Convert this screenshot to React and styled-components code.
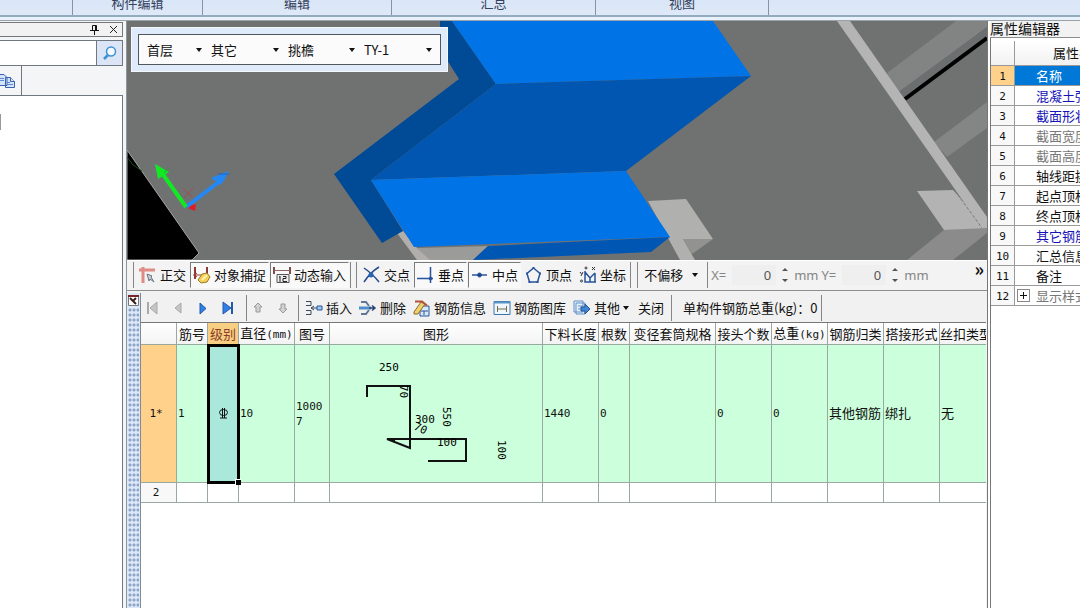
import React from "react";
import styled, { createGlobalStyle } from "styled-components";

const GlobalStyle = createGlobalStyle`
  * {
    box-sizing: border-box;
  }
  body {
    margin: 0;
    background: #fff;
    color: #111;
    font-family: "Noto Sans CJK SC", "Liberation Sans", sans-serif;
    font-size: 13px;
    line-height: 16px;
    overflow: hidden;
  }
  button,
  input,
  select {
    font: inherit;
    color: inherit;
    margin: 0;
    padding: 0;
    border: 0;
    border-radius: 0;
    background: transparent;
    outline: none;
  }
`;

const Page = styled.div`
  display: flex;
  flex-direction: column;
  height: 100vh;
`;

/* ribbon */
const Ribbon = styled.header`
  display: flex;
  flex: none;
  height: 21px;
  background: #e9f1fa;
  border-bottom: 1px solid #9aa3ab;
`;
const RibbonGroups = styled.div`
  display: flex;
  flex: 1;
  height: 17px;
  background: linear-gradient(#d9e6f7, #dfe9f8);
  border-bottom: 2px solid #93abbf;
`;
const RibbonGroup = styled.div`
  display: flex;
  flex: none;
  align-items: flex-end;
  justify-content: center;
  width: ${(p) => p.$width}px;
  padding-bottom: 4px;
  color: #33415c;
  border-right: 1px solid #8793a3;
`;

const Main = styled.main`
  display: flex;
  flex: 1;
  min-height: 0;
`;

/* left panel */
const Left = styled.aside`
  display: flex;
  flex: none;
  flex-direction: column;
  width: 127px;
  padding: 1px 3px 0 0;
  background: #f3f5f7;
  border-right: 1px solid #8f959b;
`;
const LeftTitle = styled.div`
  display: flex;
  align-items: center;
  justify-content: flex-end;
  gap: 10px;
  height: 15px;
  padding-right: 4px;
  background: #f2f2f2;
  border: 1px solid #777;
  border-left: 0;
`;
const IconButton = styled.button`
  display: flex;
  align-items: center;
  justify-content: center;
`;
const Search = styled.form`
  display: flex;
  height: 26px;
  margin-top: 3px;
  border: 1px solid #6f7780;
  border-left: 0;

  input {
    flex: 1;
    min-width: 0;
    background: #fff;
    border-right: 1px solid #6f7780;
  }
  button {
    width: 25px;
    background: #dbe5f5;
  }
`;
const LeftTabs = styled.div`
  display: flex;
  height: 29px;

  button {
    width: 22px;
    justify-content: flex-start;
    border-right: 1px solid #6f7780;
  }
`;
const Tree = styled.div`
  flex: 1;
  padding-top: 18px;
  background: #fff;
  border-top: 1px solid #6f7780;
  border-right: 1px solid #6f7780;
`;
const TreeFocus = styled.div`
  width: 1px;
  height: 16px;
  background: #999;
`;

/* centre */
const Center = styled.section`
  display: flex;
  flex: 1;
  flex-direction: column;
  min-width: 0;
  background: #f1f2f2;
`;
const Viewport = styled.div`
  position: relative;
  flex: none;
  height: 239px;
  background: #707271;
  overflow: hidden;
`;
const Scene = styled.svg`
  display: block;
  width: 100%;
  height: 100%;
`;
const Selector = styled.div`
  position: absolute;
  top: 6px;
  left: 4px;
  padding: 6px;
  background: #dfeafa;
  border: 1px solid #f4f8fd;
`;
const SelectorInner = styled.div`
  display: flex;
  height: 31px;
  background: #fbfbfb;
  border: 1px solid #4f565e;
`;
const SelectBox = styled.label`
  display: grid;
  flex: none;
  align-items: center;
  width: ${(p) => p.$width}px;

  select,
  svg {
    grid-area: 1 / 1;
  }
  select {
    width: 100%;
    height: 100%;
    padding-left: ${(p) => p.$pad || 8}px;
    appearance: none;
  }
  svg {
    justify-self: end;
    margin-right: 8px;
    pointer-events: none;
  }
`;

const SnapBar = styled.div`
  display: flex;
  flex: none;
  align-items: center;
  gap: 1px;
  height: 31px;
  padding: 0 3px 2px 6px;
  background: #f3f3f3;
  border-top: 1px solid #fff;
  border-bottom: 1px solid #8d8d8d;
`;
const Tool = styled.button`
  display: flex;
  flex: none;
  align-items: center;
  gap: 3px;
  height: 26px;
  padding: 0 ${(p) => (p.$textOnly ? 4 : 2)}px;
  white-space: nowrap;
  background: ${(p) => (p.$pressed ? "#f9f9f9" : "transparent")};
  border: 1px solid transparent;
  border-top-color: ${(p) => (p.$pressed ? "#7b7b7b" : "transparent")};
  border-left-color: ${(p) => (p.$pressed ? "#7b7b7b" : "transparent")};
`;
const Divider = styled.span`
  flex: none;
  width: 1px;
  height: 26px;
  margin: 0 ${(p) => p.$after ?? 1}px 0 ${(p) => p.$before ?? 0}px;
  background: #858585;
`;
const Coord = styled.label`
  display: flex;
  flex: none;
  align-items: center;
  gap: 6px;
  margin-left: 2px;
  color: #858585;
  font-family: "Noto Sans", "Noto Sans CJK SC", sans-serif;

  input {
    width: 44px;
    height: 20px;
    padding-right: 5px;
    color: #555;
    text-align: right;
    background: #efefef;
  }
`;
const More = styled.button`
  align-self: flex-start;
  height: 14px;
  margin-left: auto;
  font-size: 18px;
  font-weight: 700;
  line-height: 10px;
`;

const Editor = styled.div`
  display: flex;
  flex: 1;
  min-height: 0;
  margin-top: 2px;
`;
const Grip = styled.div`
  display: flex;
  flex: none;
  flex-direction: column;
  width: 14px;
  padding: 2px 1px 0;
  background: #dce8f7;
  border-right: 1px solid #7f8a97;
`;
const GripDots = styled.div`
  flex: 1;
  margin-top: 2px;
  background: radial-gradient(circle at 2px 2px, #8fa4c9 1px, transparent 2px) 0 0 / 4px 5px;
`;
const EditorBody = styled.div`
  display: flex;
  flex: 1;
  flex-direction: column;
  min-width: 0;
`;
const EditBar = styled.div`
  display: flex;
  flex: none;
  align-items: center;
  gap: 1px;
  height: 29px;
  background: #f1f1f1;
`;
const Nav = styled(IconButton)`
  flex: none;
  width: 24px;
  height: 24px;
`;
const Total = styled.span`
  margin-left: 8px;
  white-space: nowrap;
`;
const GridWrap = styled.div`
  flex: 1;
  min-height: 0;
  margin-right: 1px;
  overflow: hidden;
  background: #fff;
  border-top: 1px solid #777;
`;
const Grid = styled.table`
  table-layout: fixed;
  width: 100%;
  border-spacing: 0;
  line-height: 13px;

  th,
  td {
    padding: 0 1px 2px 1px;
    text-align: left;
    border-right: 1px solid #9aa99f;
    border-bottom: 1px solid #9aa99f;
  }
  tr > :last-child {
    border-right: 0;
  }
  th {
    height: 22px;
    padding: 0;
    font-weight: 400;
    text-align: center;
    white-space: nowrap;
    overflow: hidden;
    background: linear-gradient(#fff, #f3f3f3);
  }
`;
const ActiveHead = styled.th`
  && {
    color: #8a3c28;
    background: #f7cf83;
  }
`;
const BarRow = styled.tr`
  height: 138px;
  background: #ccffdb;
`;
const EmptyRow = styled.tr`
  height: 20px;
`;
const RowHead = styled.td`
  && {
    padding-right: 6px;
    text-align: center;
    background: ${(p) => (p.$active ? "#ffd18a" : "#f8f8f8")};
  }
`;
const ActiveCell = styled.td`
  && {
    position: relative;
    padding: 0;
    text-align: center;
    background: #abe8dc;
    outline: 3px solid #000;
    outline-offset: -2px;
  }
  &::after {
    content: "";
    position: absolute;
    right: -3px;
    bottom: -3px;
    width: 5px;
    height: 5px;
    background: #000;
    border-top: 1px solid #fff;
    border-left: 1px solid #fff;
  }
`;
const ShapeCell = styled.td`
  && {
    padding: 0 1px 0 2px;
  }
`;
const Num = styled.span`
  font-family: "DejaVu Sans Mono", monospace;
  font-size: 11px;
  line-height: 12px;
  word-break: break-all;
`;
const Shape = styled.svg`
  display: block;
  height: 137px;
  font-family: "DejaVu Sans Mono", monospace;
  font-size: 11px;
`;

/* property editor */
const Right = styled.aside`
  flex: none;
  width: 93px;
  padding-left: 2px;
  overflow: hidden;
  background: #fff;
  border-left: 1px solid #777;
  white-space: nowrap;
`;
const PropsTitle = styled.h2`
  height: 17px;
  margin: 0;
  font-size: 14px;
  font-weight: 400;
  line-height: 15px;
  background: #f2f2f2;
  border-bottom: 1px solid #8d8d8d;
`;
const PropsBody = styled.div`
  height: 100%;
  padding-top: 3px;
  border-left: 1px solid #777;
`;
const Props = styled.table`
  table-layout: fixed;
  width: 100%;
  border-spacing: 0;

  th,
  td {
    height: 20px;
    padding: 0;
    font-weight: 400;
    text-align: left;
    overflow: hidden;
    border-bottom: 1px solid #9a9a9a;
  }
  thead th {
    height: 25px;
    padding-left: 38px;
    background: linear-gradient(#fff, #f1f1f1);
  }
  tr > :first-child {
    padding: 0;
    text-align: center;
    border-right: 1px solid #9a9a9a;
  }
`;
const PropIndex = styled.th`
  && {
    line-height: 14px;
    background: ${(p) => (p.$active ? "#ffd18a" : "#f8f8f8")};
  }
`;
const PropName = styled.td`
  color: ${(p) => p.$color || "#111"};
  background: ${(p) => (p.$active ? "#0078d7" : "#fff")};
`;
const PropFlex = styled.div`
  display: flex;
  align-items: center;
  height: 19px;
  padding-left: ${(p) => (p.$expand ? 2 : 21)}px;
  gap: 6px;
`;
const Expand = styled.button`
  display: flex;
  flex: none;
  align-items: center;
  justify-content: center;
  width: 13px;
  height: 13px;

  && {
    border: 1px solid #888;
  }
`;

const Icon = ({ children, size = 18 }) => (
  <svg width={size} height={size} viewBox={`0 0 ${size} ${size}`} fill="none" stroke="#28549c" aria-hidden="true">
    {children}
  </svg>
);

const Caret = () => (
  <svg width="6" height="4" viewBox="0 0 6 4" aria-hidden="true">
    <path d="M0 0h6L3 4z" fill="#111" />
  </svg>
);

const Spinner = () => (
  <svg width="6" height="16" viewBox="0 0 6 16" fill="#555" aria-hidden="true">
    <path d="M0 4l3-3 3 3zM0 12h6l-3 3z" />
  </svg>
);

const icons = {
  ortho: (
    <>
      <path d="M0 4h16M4 1v16" stroke="#e08c86" strokeWidth="3" />
      <path d="M8 8l5 2-1 1 3 5-4-3-1 2z" fill="#c9ced6" stroke="#6e7682" />
    </>
  ),
  snap: (
    <>
      <path d="M2 1v12M14 1v8" stroke="#8c3a33" strokeWidth="2" />
      <path d="M0 9h9M4 7L1 9l3 2" stroke="#98433b" />
      <path d="M5 14l4-6 5-1 3 4-3 5-6 1z" fill="#f4cf54" stroke="#9a7927" />
      <path d="M9 14l5-5" stroke="#fff2b0" strokeWidth="2" />
    </>
  ),
  dynamic: (
    <>
      <path d="M1 1v7M17 1v7" stroke="#7a4c4a" strokeWidth="2" />
      <path d="M1 4.500h16" stroke="#8d6664" />
      <path d="M4 8.500h12v8H4z" stroke="#555" fill="#eee" />
      <path d="M7 10v6M6 11h1M10 10.500h3v2h-3v3h4" stroke="#222" />
    </>
  ),
  cross: (
    <>
      <path d="M1 2c3 2 11 9 15 14M16 1C11 4 5 10 1 16" stroke="#254a8d" strokeWidth="1.500" />
      <circle cx="8" cy="9" r="2.500" fill="#2767b4" stroke="none" />
    </>
  ),
  perp: (
    <>
      <path d="M0 12.500h16M13.500 1v16" strokeWidth="1.500" />
      <circle cx="13.500" cy="12.500" r="1.500" fill="#28549c" />
    </>
  ),
  mid: (
    <>
      <path d="M1 9h15" strokeWidth="1.500" />
      <circle cx="8.500" cy="9" r="2" fill="#1e4488" />
    </>
  ),
  vertex: (
    <>
      <path d="M8.500 2l6.500 5.500-2.500 8.500h-8L2 7.500z" strokeWidth="1.500" />
      <path d="M7.500 1h2v2h-2zM1 6.500h2v2H1zM14 6.500h2v2h-2zM3.500 15h2v2h-2zM11.500 15h2v2h-2z" fill="#28549c" stroke="none" />
    </>
  ),
  axes: (
    <>
      <path d="M6 5v11h11M6 6l5 6 5-5M11 12v4M16 7v9" strokeWidth="1.500" />
      <path d="M1 6l1.500 2M4 6l-2 4M13 1l3 3M16 1l-3 3" stroke="#333" />
      <circle cx="7" cy="2" r="1" stroke="#333" />
      <circle cx="2.500" cy="15" r="1" stroke="#333" />
    </>
  ),
  insert: (
    <>
      <path d="M1 2.500h5v4H1M1 11.500h5v4H1M6 9h6M9 7L6 9l3 2" stroke="#3b4657" />
      <path d="M12 7h5v4h-5z" fill="#9ccbed" stroke="#28549c" />
    </>
  ),
  remove: (
    <>
      <path d="M2 3h5l3 4M2 15h5l3-4" stroke="#5f7694" strokeWidth="2" />
      <path d="M0 9h12" stroke="#4f8dcb" strokeWidth="3" />
      <path d="M10 9h6M13 6.500L16 9l-3 2.500" stroke="#27436f" strokeWidth="1.500" />
    </>
  ),
  info: (
    <>
      <path d="M7 7h9v10H7z" fill="#d8e9f8" />
      <path d="M8 12h7M11 12v4" />
      <path d="M1 13L8 3l4 2-7 10H1z" fill="#efd06b" stroke="#8b6a2c" />
      <path d="M2 2.500h7l5 4" stroke="#b4533d" strokeWidth="2" />
    </>
  ),
  library: (
    <>
      <path d="M1 2.500h16v13H1z" fill="#eef7fd" stroke="#3c74ae" />
      <path d="M1 3.500h16" strokeWidth="2" stroke="#5795c9" />
      <path d="M4.500 7v6M4 10h9M13.500 7v6" stroke="#796b42" />
    </>
  ),
  other: (
    <>
      <path d="M1 2h9v11H1zM3 4h9v11H3z" fill="#e6f0fb" stroke="#5e8fc5" />
      <path d="M5 7h5M5 10h4" stroke="#5e8fc5" />
      <path d="M8 8h4V5l5 5-5 5v-3H8z" fill="#3f85d8" stroke="#265291" />
    </>
  ),
};

const Snap = ({ icon, label, pressed }) => (
  <Tool type="button" $pressed={pressed} aria-pressed={!!pressed}>
    <Icon>{icons[icon]}</Icon>
    {label}
  </Tool>
);

const Select = ({ name, value, width, pad }) => (
  <SelectBox $width={width} $pad={pad}>
    <select aria-label={name} defaultValue={value}>
      <option>{value}</option>
    </select>
    <Caret />
  </SelectBox>
);

const ribbonGroups = [
  ["", 73],
  ["构件编辑", 130],
  ["编辑", 189],
  ["汇总", 204],
  ["视图", 173],
];

const columns = [36, 31, 31, 56, 35, 213, 56, 31, 86, 56, 56, 56, 56];

const properties = [
  { name: "名称", color: "#fff", active: true },
  { name: "混凝土强度等级", color: "#1512b8" },
  { name: "截面形状", color: "#1512b8" },
  { name: "截面宽度(mm)", color: "#777" },
  { name: "截面高度(mm)", color: "#777" },
  { name: "轴线距挑檐外边" },
  { name: "起点顶标高(m)" },
  { name: "终点顶标高(m)" },
  { name: "其它钢筋", color: "#1512b8" },
  { name: "汇总信息" },
  { name: "备注" },
  { name: "显示样式", color: "#777", expand: true },
];

const Model = () => (
  <Scene viewBox="127 21 860 239" preserveAspectRatio="xMinYMin slice" role="img" aria-label="三维视图">
    <path d="M127 150l72 103-7 7h-65z" fill="#000" stroke="#a5a5a5" />
    <path d="M127 157l6 8 9 6" fill="none" stroke="#174d1b" />

    <path d="M887 73l69-52h31v6l-90 68z" fill="#828483" />
    <path d="M987 27v11l-83 60-7-5z" fill="#6c6f6f" />
    <path d="M905 99l82-61" stroke="#000" strokeWidth="4" />
    <path d="M934 142l53-40v26l-40 29z" fill="#848685" />
    <path d="M944 230l43-3v6l-34 27h-46z" fill="#8c8b8b" />
    <path d="M917 191l36-1 34 38-43 2z" fill="#b2b3b2" />
    <path d="M837 21h13l137 196v11h-5z" fill="#b3b4b3" />
    <path d="M958 195l24 33" stroke="#777" strokeDasharray="3 2" />

    <path d="M683 239h30l-21 15z" fill="#929391" />
    <path d="M648 201l38-2 27 40h-30l12 21h-15l-12-22z" fill="#b0b0ae" />
    <path d="M397 233l6-2 14 17 14 12h-14z" fill="#b1aeac" />
    <path d="M417 248l71-2-15 14h-43z" fill="#9b9b99" />

    <path d="M440 21h12l44 63-125 96 32 51-21 12-48-69 125-95-19-30z" fill="#004a96" />
    <path d="M452 21h261l38 55-255 8z" fill="#0073e6" />
    <path d="M496 84l255-8-125 95-255 9z" fill="#0056b0" />
    <path d="M371 180l255-9 44 66-256 10z" fill="#0073e6" />
    <path d="M488 246l182-9-19 15-178 8z" fill="#0057b3" />

    <path d="M183 188l10 10M193 188l-9 10" stroke="#a34a52" />
    <path d="M185 207l11-3-1 7z" fill="#df1d25" />
    <path d="M186 207l38-29" stroke="#2388f5" strokeWidth="4" />
    <path d="M211 178l18-7-8 14z" fill="#2388f5" />
    <path d="M218 174h11" stroke="#1c63d0" />
    <path d="M186 207l-24-34" stroke="#13e825" strokeWidth="4" />
    <path d="M155 164l14 8-11 7z" fill="#13e825" />
    <path d="M164 173l5-5" stroke="#25a52e" />
  </Scene>
);

const BarShape = () => (
  <Shape viewBox="332 345 209 137" role="img" aria-label="钢筋图形">
    <path d="M367 397v-11h43v62l-23-9h79v22h-38" fill="none" stroke="#111" strokeWidth="2" />
    <path d="M387 438l8 1v4z" fill="#111" />
    <text x="379" y="371">250</text>
    <text x="415" y="423">300</text>
    <text x="437" y="446">100</text>
    <text transform="translate(400 385) rotate(90)">70</text>
    <text transform="translate(443 407) rotate(90)">550</text>
    <text transform="translate(498 440) rotate(90)">100</text>
    <text transform="translate(413 429) rotate(25)">70</text>
  </Shape>
);

const App = () => (
  <Page>
    <GlobalStyle />
    <Ribbon>
      <RibbonGroups>
        {ribbonGroups.map(([label, width]) => (
          <RibbonGroup key={width} $width={width}>
            {label}
          </RibbonGroup>
        ))}
      </RibbonGroups>
    </Ribbon>
    <Main>
      <Left>
        <LeftTitle>
          <IconButton type="button" aria-label="固定">
            <svg width="9" height="10" viewBox="0 0 9 10" stroke="#111" fill="none">
              <path d="M2.500 5.500v-5h4v5M0 5.500h9M4.500 6v4" />
              <path d="M6 1v4" strokeWidth="2" />
            </svg>
          </IconButton>
          <IconButton type="button" aria-label="关闭面板">
            <svg width="9" height="9" viewBox="0 0 9 9" stroke="#222">
              <path d="M1 1l7 7M8 1L1 8" />
            </svg>
          </IconButton>
        </LeftTitle>
        <Search onSubmit={(e) => e.preventDefault()}>
          <input type="text" aria-label="搜索构件" />
          <IconButton type="submit" aria-label="搜索">
            <svg width="14" height="14" viewBox="0 0 14 14" fill="#f4faff" stroke="#3d92d4">
              <circle cx="8" cy="5.500" r="4.500" strokeWidth="1.500" />
              <path d="M5 9l-4 4" strokeWidth="2.500" />
            </svg>
          </IconButton>
        </Search>
        <LeftTabs>
          <IconButton type="button" aria-label="复制构件">
            <svg width="16" height="16" viewBox="0 0 16 16" fill="#d3e4fa" stroke="#3c62ae">
              <path d="M-3 1.500h7l3 3v8H-3zM5.500 4.500h5l4 4v6h-9z" />
              <path d="M10.500 4.500v4h4" />
              <path d="M7 9.500h3M7 11.500h6M0 5.500h4M0 7.500h4" stroke="#5c8bd0" />
            </svg>
          </IconButton>
        </LeftTabs>
        <Tree>
          <TreeFocus />
        </Tree>
      </Left>

      <Center>
        <Viewport>
          <Model />
          <Selector>
            <SelectorInner>
              <Select name="楼层" value="首层" width={71} />
              <Select name="类别" value="其它" width={77} pad={1} />
              <Select name="构件类型" value="挑檐" width={76} pad={1} />
              <Select name="构件" value="TY-1" width={77} pad={1} />
            </SelectorInner>
          </Selector>
        </Viewport>

        <SnapBar>
          <Divider />
          <Snap icon="ortho" label="正交" />
          <Snap icon="snap" label="对象捕捉" pressed />
          <Snap icon="dynamic" label="动态输入" pressed />
          <Divider $after={4} />
          <Divider $after={2} />
          <Snap icon="cross" label="交点" />
          <Snap icon="perp" label="垂点" pressed />
          <Snap icon="mid" label="中点" pressed />
          <Snap icon="vertex" label="顶点" />
          <Snap icon="axes" label="坐标" />
          <Divider $after={5} />
          <Divider $after={0} />
          <Select name="偏移方式" value="不偏移" width={67} pad={5} />
          <Divider $after={0} />
          <Coord>
            X=
            <input type="text" defaultValue="0" />
            <Spinner />
            mm
          </Coord>
          <Coord>
            Y=
            <input type="text" defaultValue="0" />
            <Spinner />
            mm
          </Coord>
          <More type="button" aria-label="更多">
            »
          </More>
        </SnapBar>

        <Editor>
          <Grip>
            <svg width="11" height="11" viewBox="0 0 11 11" fill="#fff" stroke="#222">
              <path d="M.5.5h10v10H.5z" stroke="#777" />
              <path d="M2 3l6 6M8 3L5 6" stroke="#3a1c1c" strokeWidth="2" />
              <path d="M0 1h11" stroke="#7a2626" strokeWidth="2" />
            </svg>
            <GripDots />
          </Grip>
          <EditorBody>
            <EditBar>
              <Nav type="button" aria-label="首条">
                <Icon>
                  <path d="M4 3v12" stroke="#a9a9a9" strokeWidth="2" />
                  <path d="M13 3v12L6 9z" fill="#c5c5c5" stroke="#a9a9a9" />
                </Icon>
              </Nav>
              <Nav type="button" aria-label="上一条">
                <Icon>
                  <path d="M12 4v10L6 9z" fill="#c5c5c5" stroke="#a9a9a9" />
                </Icon>
              </Nav>
              <Nav type="button" aria-label="下一条">
                <Icon>
                  <path d="M6 4v11l6-5.500z" fill="#2f7fe6" stroke="#2258ab" />
                </Icon>
              </Nav>
              <Nav type="button" aria-label="末条">
                <Icon>
                  <path d="M4 3v12l8-6z" fill="#2f7fe6" stroke="#2258ab" />
                  <path d="M13 3v12" stroke="#2258ab" strokeWidth="2" />
                </Icon>
              </Nav>
              <Divider $before={5} $after={0} />
              <Nav type="button" aria-label="上移">
                <Icon>
                  <path d="M7 4l4 4H9v5H5V8H3z" fill="#d2d2d2" stroke="#999" />
                </Icon>
              </Nav>
              <Nav type="button" aria-label="下移">
                <Icon>
                  <path d="M7 14l4-4H9V5H5v5H3z" fill="#d2d2d2" stroke="#999" />
                </Icon>
              </Nav>
              <Divider $after={2} />
              <Snap icon="insert" label="插入" />
              <Snap icon="remove" label="删除" />
              <Snap icon="info" label="钢筋信息" />
              <Snap icon="library" label="钢筋图库" />
              <Tool type="button">
                <Icon>{icons.other}</Icon>
                其他
                <Caret />
              </Tool>
              <Tool type="button" $textOnly>
                关闭
              </Tool>
              <Divider $before={1} $after={2} />
              <Total>单构件钢筋总重(kg)：0</Total>
              <Divider $before={3} />
            </EditBar>

            <GridWrap>
              <Grid>
                <colgroup>
                  {columns.map((width, i) => (
                    <col key={i} width={width} />
                  ))}
                  <col />
                </colgroup>
                <thead>
                  <tr>
                    <th />
                    <th>筋号</th>
                    <ActiveHead>级别</ActiveHead>
                    <th>
                      直径<Num>(mm)</Num>
                    </th>
                    <th>图号</th>
                    <th>图形</th>
                    <th>下料长度</th>
                    <th>根数</th>
                    <th>变径套筒规格</th>
                    <th>接头个数</th>
                    <th>
                      总重<Num>(kg)</Num>
                    </th>
                    <th>钢筋归类</th>
                    <th>搭接形式</th>
                    <th>丝扣类型</th>
                  </tr>
                </thead>
                <tbody>
                  <BarRow>
                    <RowHead $active>
                      <Num>1*</Num>
                    </RowHead>
                    <td>
                      <Num>1</Num>
                    </td>
                    <ActiveCell>
                      <svg width="11" height="11" viewBox="0 0 11 11" fill="none" stroke="#111" role="img" aria-label="HRB400">
                        <ellipse cx="5.500" cy="4.500" rx="4" ry="3" />
                        <path d="M4.500 0v10M6.500 0v10M2 10h7" />
                      </svg>
                    </ActiveCell>
                    <td>
                      <Num>10</Num>
                    </td>
                    <td>
                      <Num>10007</Num>
                    </td>
                    <ShapeCell>
                      <BarShape />
                    </ShapeCell>
                    <td>
                      <Num>1440</Num>
                    </td>
                    <td>
                      <Num>0</Num>
                    </td>
                    <td />
                    <td>
                      <Num>0</Num>
                    </td>
                    <td>
                      <Num>0</Num>
                    </td>
                    <td>其他钢筋</td>
                    <td>绑扎</td>
                    <td>无</td>
                  </BarRow>
                  <EmptyRow>
                    <RowHead>
                      <Num>2</Num>
                    </RowHead>
                    {columns.map((_, i) => (
                      <td key={i} />
                    ))}
                  </EmptyRow>
                </tbody>
              </Grid>
            </GridWrap>
          </EditorBody>
        </Editor>
      </Center>

      <Right>
        <PropsTitle>属性编辑器</PropsTitle>
        <PropsBody>
          <Props>
            <colgroup>
              <col width="24" />
              <col />
            </colgroup>
            <thead>
              <tr>
                <th />
                <th>属性名称</th>
              </tr>
            </thead>
            <tbody>
              {properties.map((prop, i) => (
                <tr key={prop.name}>
                  <PropIndex scope="row" $active={prop.active}>
                    <Num>{i + 1}</Num>
                  </PropIndex>
                  <PropName $color={prop.color} $active={prop.active}>
                    <PropFlex $expand={prop.expand}>
                      {prop.expand && (
                        <Expand type="button" aria-label="展开">
                          <svg width="7" height="7" viewBox="0 0 7 7" stroke="#111">
                            <path d="M0 3.500h7M3.500 0v7" />
                          </svg>
                        </Expand>
                      )}
                      {prop.name}
                    </PropFlex>
                  </PropName>
                </tr>
              ))}
            </tbody>
          </Props>
        </PropsBody>
      </Right>
    </Main>
  </Page>
);

export default App;
